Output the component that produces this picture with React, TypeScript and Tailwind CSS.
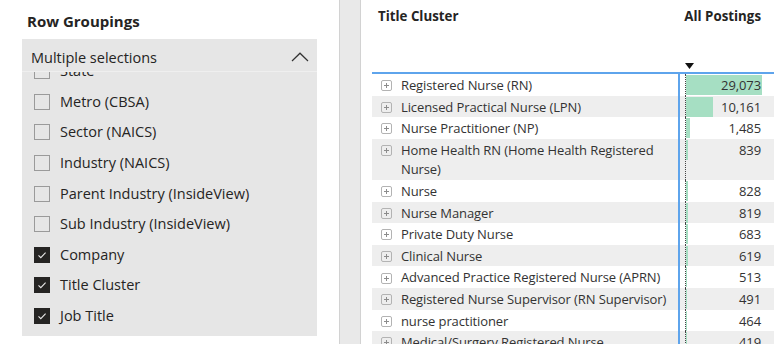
import React from "react";

const font = { fontFamily: '"Open Sans", "Noto Sans", sans-serif' };

const groupItems: { label: string; checked: boolean }[] = [
  { label: "State", checked: false },
  { label: "Metro (CBSA)", checked: false },
  { label: "Sector (NAICS)", checked: false },
  { label: "Industry (NAICS)", checked: false },
  { label: "Parent Industry (InsideView)", checked: false },
  { label: "Sub Industry (InsideView)", checked: false },
  { label: "Company", checked: true },
  { label: "Title Cluster", checked: true },
  { label: "Job Title", checked: true },
];

const rows: { name: string; value: number }[] = [
  { name: "Registered Nurse (RN)", value: 29073 },
  { name: "Licensed Practical Nurse (LPN)", value: 10161 },
  { name: "Nurse Practitioner (NP)", value: 1485 },
  { name: "Home Health RN (Home Health Registered Nurse)", value: 839 },
  { name: "Nurse", value: 828 },
  { name: "Nurse Manager", value: 819 },
  { name: "Private Duty Nurse", value: 683 },
  { name: "Clinical Nurse", value: 619 },
  { name: "Advanced Practice Registered Nurse (APRN)", value: 513 },
  { name: "Registered Nurse Supervisor (RN Supervisor)", value: 491 },
  { name: "nurse practitioner", value: 464 },
  { name: "Medical/Surgery Registered Nurse", value: 419 },
];

function Checkbox({ checked }: { checked: boolean }) {
  if (checked) {
    return (
      <span className="w-[16px] h-[16px] shrink-0 bg-[#252423] flex items-center justify-center">
        <svg width="12" height="12" viewBox="0 0 12 12">
          <path d="M2.5 6.3 L4.8 8.6 L9.6 3.6" fill="none" stroke="#e8e8e8" strokeWidth="1.1" />
        </svg>
      </span>
    );
  }
  return <span className="w-[16px] h-[16px] shrink-0 border border-[#9a9a9a] bg-[#e6e6e6]" />;
}

function PlusIcon() {
  return (
    <svg width="11" height="11" viewBox="0 0 11 11" className="shrink-0">
      <rect x="0.5" y="0.5" width="10" height="10" rx="1.5" fill="none" stroke="#b3b3b3" />
      <path d="M3 5.5 H8 M5.5 3 V8" stroke="#8c8c8c" strokeWidth="1" />
    </svg>
  );
}

export default function App() {
  const max = 29073;
  return (
    <div className="w-[774px] h-[344px] bg-white flex overflow-hidden text-[#252423]" style={font}>
      {/* Left slicer */}
      <div className="w-[339px] shrink-0 flex flex-col">
        <div className="shrink-0 pl-[27px] pt-[10px] h-[39px] text-[15px] font-bold leading-[22px]">Row Groupings</div>
        <div className="shrink-0 ml-[22px] w-[295px] bg-[#e6e6e6] flex flex-col">
          <div className="shrink-0 h-[33px] flex items-center justify-between pl-[9px] pr-[8px] border-b border-[#efefef]">
            <span className="text-[14.5px] leading-[20px] pt-[5px]">Multiple selections</span>
            <svg width="18" height="10" viewBox="0 0 18 10" className="mt-[3px]">
              <path d="M1 9 L9 1.2 L17 9" fill="none" stroke="#333333" strokeWidth="1.2" />
            </svg>
          </div>
          <div className="shrink-0 h-[264px] overflow-hidden">
            <div className="mt-[-16px] flex flex-col">
              {groupItems.map((it) => (
                <div key={it.label} className="shrink-0 h-[30.6px] flex items-center pl-[12px] gap-[10px]">
                  <Checkbox checked={it.checked} />
                  <span className="text-[14.5px] leading-[20px] whitespace-nowrap">{it.label}</span>
                </div>
              ))}
            </div>
          </div>
        </div>
      </div>

      {/* Divider strip */}
      <div className="w-[22px] shrink-0 h-full bg-[#e9e9e9] border-x border-[#d2d2d2]" />

      {/* Table */}
      <div className="flex-1 flex flex-col pl-[11px] min-w-0">
        <div className="shrink-0 h-[72px] flex justify-between pl-[6px] pr-[13px] pt-[6px] relative">
          <span className="text-[13.3px] font-bold leading-[20px]">Title Cluster</span>
          <span className="text-[13.3px] font-bold leading-[20px]">All Postings</span>
          <svg width="9" height="6" viewBox="0 0 9 6" className="absolute left-[313px] top-[63px]">
            <path d="M0 0 H9 L4.5 6 Z" fill="#111111" />
          </svg>
        </div>
        <div className="shrink-0 h-[2px] bg-[#5ea4ec]" />
        <div className="shrink-0 flex flex-col text-[13px] leading-[19.6px] text-[#333333] tracking-[-0.1px]">
          {rows.map((r, i) => (
            <div key={r.name} className={`shrink-0 flex ${i % 2 === 1 ? "bg-[#eeeeee]" : "bg-white"}`}>
              <div className="w-[306px] shrink-0 flex items-start pl-[9px] gap-[9px] pt-[2px]">
                <span className="h-[19.6px] flex items-center shrink-0">
                  <PlusIcon />
                </span>
                <span>{r.name}</span>
              </div>
              <div className="w-[2px] shrink-0 bg-[#5ea4ec]" />
              <div className="flex-1 relative pt-[2px] pr-[13px] text-right">
                <div className="absolute left-[5px] top-0 bottom-0 border-l border-dotted border-[#444444]" />
                <div
                  className="absolute left-[6px] top-[1px] h-[20px] bg-[#a6dfc3]"
                  style={{ width: `${Math.max(1, (r.value / max) * 76)}px` }}
                />
                <span className="relative">{r.value.toLocaleString("en-US")}</span>
              </div>
            </div>
          ))}
        </div>
      </div>
    </div>
  );
}
